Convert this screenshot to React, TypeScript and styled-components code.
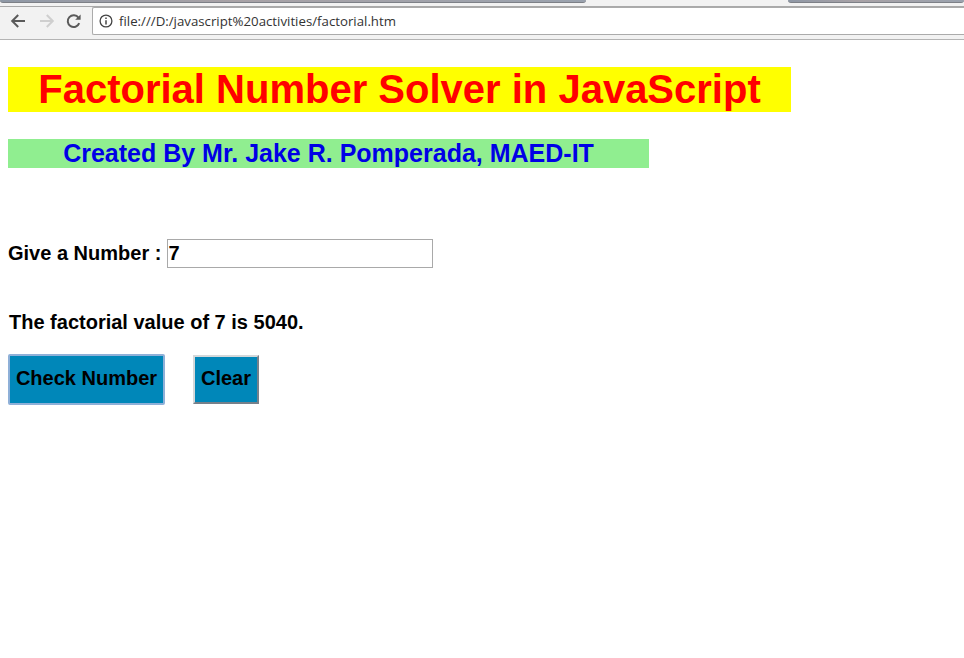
import React from 'react';
import styled, { createGlobalStyle } from 'styled-components';

const GlobalStyle = createGlobalStyle`
    html, body {
        margin: 0;
        padding: 0;
        background: #fff;
    }
    body {
        font-family: "Liberation Sans", Arial, sans-serif;
        overflow: hidden;
    }
`;

const Window = styled.div`
    width: 964px;
    height: 658px;
    display: flex;
    flex-direction: column;
`;

const TabStrip = styled.div`
    height: 6px;
    display: flex;
    background: #f2f2f2;
    border-bottom: 1px solid #a9a9a9;
`;

const InactiveTab = styled.div<{ $width: number }>`
    width: ${(p) => p.$width}px;
    height: 2px;
    background: linear-gradient(90deg, #8f98a6, #a8a2a6 40%, #9aa2ae);
    border-bottom: 1px solid #7d8087;
    border-radius: 0 0 3px 3px;
`;

const TabGap = styled.div`
    width: 202px;
`;

const Toolbar = styled.div`
    height: 32px;
    display: flex;
    align-items: flex-start;
    background: #f2f2f2;
    border-bottom: 1px solid #b4b4b4;
`;

const NavButton = styled.div<{ $margin: number }>`
    width: 18px;
    height: 18px;
    margin-left: ${(p) => p.$margin}px;
    margin-top: 5px;
    display: flex;
    align-items: center;
    justify-content: center;
`;

const AddressBar = styled.div`
    flex: 1;
    height: 28px;
    margin-left: 9px;
    box-sizing: border-box;
    display: flex;
    align-items: center;
    background: #fff;
    border: 1px solid #ababab;
    border-right: none;
    border-radius: 2px 0 0 2px;
    padding-left: 6px;
`;

const Url = styled.span`
    margin-left: 6px;
    font-family: "Open Sans", "Noto Sans", sans-serif;
    font-size: 13.25px;
    color: #333;
    white-space: nowrap;
`;

const Page = styled.main`
    flex: 1;
    padding: 27px 8px 0;
    display: flex;
    flex-direction: column;
    align-items: flex-start;
`;

const Banner = styled.h1`
    width: 783px;
    height: 45px;
    margin: 0;
    background: #ffff00;
    color: #ff0000;
    font-size: 40px;
    font-weight: 700;
    line-height: 45px;
    text-align: center;
    white-space: nowrap;
`;

const SubBanner = styled.h2`
    width: 641px;
    height: 29px;
    margin: 27px 0 0;
    background: #90ee90;
    color: #0000e6;
    font-size: 25px;
    font-weight: 700;
    line-height: 29px;
    text-align: center;
    white-space: nowrap;
`;

const FieldRow = styled.div`
    margin-top: 71px;
    display: flex;
    align-items: center;
    height: 29px;
`;

const Label = styled.label`
    font-size: 20px;
    font-weight: 700;
    color: #000;
    white-space: nowrap;
`;

const NumberInput = styled.input`
    width: 266px;
    height: 29px;
    margin-left: 6px;
    padding: 0;
    box-sizing: border-box;
    border: 1px solid #a9a9a9;
    outline: none;
    font-family: inherit;
    font-size: 20px;
    font-weight: 700;
    color: #000;
    background: #fff;
`;

const Result = styled.p`
    margin: 43px 0 0 1px;
    height: 23px;
    font-size: 20px;
    font-weight: 700;
    line-height: 23px;
    color: #000;
    white-space: nowrap;
`;

const Buttons = styled.div`
    margin-top: 20px;
    display: flex;
    align-items: center;
    gap: 28px;
`;

const ActionButton = styled.button<{ $focused?: boolean; $width: number }>`
    width: ${(p) => p.$width}px;
    height: ${(p) => (p.$focused ? 51 : 49)}px;
    padding: 0 0 2px;
    box-sizing: border-box;
    background: #0087b9;
    color: #000;
    font-family: inherit;
    font-size: 20px;
    font-weight: 700;
    border-style: solid;
    border-width: 2px;
    border-color: ${(p) =>
        p.$focused ? '#8fb0d8' : '#d4d8da #76808a #76808a #d4d8da'};
    border-radius: ${(p) => (p.$focused ? '2px' : '0')};
`;

function BackIcon() {
    return (
        <svg width="18" height="18" viewBox="0 0 18 18" fill="none">
            <path d="M16 9H3.5M9.2 3 3.2 9l6 6" stroke="#5a5a5a" strokeWidth="2" />
        </svg>
    );
}

function ForwardIcon() {
    return (
        <svg width="18" height="18" viewBox="0 0 18 18" fill="none">
            <path d="M2 9h12.5M8.8 3l6 6-6 6" stroke="#cfcfcf" strokeWidth="2" />
        </svg>
    );
}

function ReloadIcon() {
    return (
        <svg width="18" height="18" viewBox="0 0 18 18" fill="none">
            <path d="M14.2 11.2a5.9 5.9 0 1 1-.7-5.4" stroke="#5a5a5a" strokeWidth="2" />
            <path d="M15.6 2.4v5.4h-5.4z" fill="#5a5a5a" />
        </svg>
    );
}

function InfoIcon() {
    return (
        <svg width="14" height="14" viewBox="0 0 14 14" fill="none">
            <circle cx="7" cy="7" r="5.9" stroke="#444" strokeWidth="1.3" />
            <path d="M7 6.2v4.2" stroke="#444" strokeWidth="1.5" />
            <path d="M7 3.5v1.5" stroke="#444" strokeWidth="1.5" />
        </svg>
    );
}

export default function App() {
    return (
        <Window>
            <GlobalStyle />
            <TabStrip>
                <InactiveTab $width={586} />
                <TabGap />
                <InactiveTab $width={176} />
            </TabStrip>
            <Toolbar>
                <NavButton $margin={9}><BackIcon /></NavButton>
                <NavButton $margin={11}><ForwardIcon /></NavButton>
                <NavButton $margin={9}><ReloadIcon /></NavButton>
                <AddressBar>
                    <InfoIcon />
                    <Url>file:///D:/javascript%20activities/factorial.htm</Url>
                </AddressBar>
            </Toolbar>
            <Page>
                <Banner>Factorial Number Solver in JavaScript</Banner>
                <SubBanner>Created By Mr. Jake R. Pomperada, MAED-IT</SubBanner>
                <FieldRow>
                    <Label htmlFor="number">Give a Number :</Label>
                    <NumberInput id="number" defaultValue="7" />
                </FieldRow>
                <Result>The factorial value of 7 is 5040.</Result>
                <Buttons>
                    <ActionButton $focused $width={157}>Check Number</ActionButton>
                    <ActionButton $width={66}>Clear</ActionButton>
                </Buttons>
            </Page>
        </Window>
    );
}
